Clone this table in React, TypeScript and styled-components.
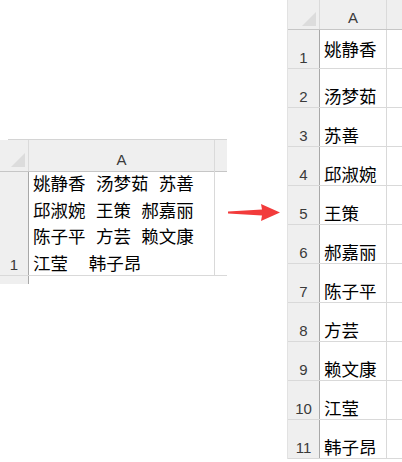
import styled, { createGlobalStyle } from 'styled-components';

const GlobalStyle = createGlobalStyle`
  html, body {
    margin: 0;
    padding: 0;
    background: #ffffff;
    overflow: hidden;
  }
`;

const CJK = `"Noto Sans CJK SC", "Noto Sans", sans-serif`;
const NUM = `"Liberation Sans", Arial, sans-serif`;

const Page = styled.div`
  display: flex;
  align-items: flex-start;
  width: 402px;
  height: 462px;
  overflow: hidden;
`;

//------ left sheet (before)

const SheetBefore = styled.div`
  width: 228px;
  margin-top: 139px;
  display: flex;
  flex-direction: column;
`;

const TabEdge = styled.div`
  height: 1px;
  margin-left: 8px;
  background: #d4d4d4;
`;

const HeaderRow = styled.div<{ $h: number }>`
  display: flex;
  height: ${(p) => p.$h}px;
  box-sizing: border-box;
  background: #efefef;
  border-bottom: 1px solid #c6c6c6;
`;

const Corner = styled.div<{ $w: number }>`
  position: relative;
  width: ${(p) => p.$w}px;
  flex-shrink: 0;
  box-sizing: border-box;
  border-right: 1px solid #dadada;
`;

const CornerMark = styled.div<{ $right: number; $bottom: number }>`
  position: absolute;
  right: ${(p) => p.$right}px;
  bottom: ${(p) => p.$bottom}px;
  width: 0;
  height: 0;
  border-left: 14px solid transparent;
  border-bottom: 14px solid #dcdcdc;
`;

const ColHead = styled.div<{ $w: number; $pb: number }>`
  width: ${(p) => p.$w}px;
  flex-shrink: 0;
  box-sizing: border-box;
  border-right: 1px solid #dadada;
  display: flex;
  align-items: flex-end;
  justify-content: center;
  padding-bottom: ${(p) => p.$pb}px;
  font-family: ${NUM};
  font-size: 15px;
  line-height: 15px;
  color: #3a3a3a;
`;

const BodyRow = styled.div<{ $h: number }>`
  display: flex;
  height: ${(p) => p.$h}px;
  box-sizing: border-box;
  border-bottom: 1px solid #d9d9d9;
`;

const RowHead = styled.div<{ $w: number; $pb: number }>`
  width: ${(p) => p.$w}px;
  flex-shrink: 0;
  box-sizing: border-box;
  background: #efefef;
  border-right: 1px solid #a8a8a8;
  display: flex;
  align-items: flex-end;
  justify-content: center;
  padding-bottom: ${(p) => p.$pb}px;
  font-family: ${NUM};
  font-size: 15px;
  line-height: 15px;
  color: #3a3a3a;
`;

const WrapCell = styled.div`
  width: 186px;
  flex-shrink: 0;
  box-sizing: border-box;
  border-right: 1px solid #d9d9d9;
  padding: 0 0 0 4px;
  margin-top: -2px;
  font-family: ${CJK};
  font-size: 17.5px;
  line-height: 26.5px;
  word-spacing: 6.5px;
  white-space: pre;
  color: #000;
`;

const Filler = styled.div`
  flex: 1;
`;

const GrayTail = styled.div`
  width: 29px;
  height: 8px;
  background: #efefef;
  box-sizing: border-box;
  border-right: 1px solid #a8a8a8;
`;

//------ arrow

const ArrowBox = styled.div`
  margin-top: 204px;
  margin-left: 1px;
  width: 52px;
  height: 17px;
  flex-shrink: 0;
`;

//------ right sheet (after)

const SheetAfter = styled.div`
  margin-left: 7px;
  width: 114px;
  flex-shrink: 0;
  border-left: 1px solid #e2e2e2;
  display: flex;
  flex-direction: column;
`;

const NameCell = styled.div<{ $top?: boolean }>`
  width: 67px;
  flex-shrink: 0;
  box-sizing: border-box;
  border-right: 1px solid #d9d9d9;
  display: flex;
  align-items: ${(p) => (p.$top ? 'flex-start' : 'flex-end')};
  padding: ${(p) => (p.$top ? '9px 0 0 4px' : '0 0 1px 4px')};
  font-family: ${CJK};
  font-size: 17.5px;
  line-height: 20px;
  color: #000;
`;

const lines = ['姚静香 汤梦茹 苏善', '邱淑婉 王策 郝嘉丽', '陈子平 方芸 赖文康', '江莹  韩子昂'];
const names = ['姚静香', '汤梦茹', '苏善', '邱淑婉', '王策', '郝嘉丽', '陈子平', '方芸', '赖文康', '江莹', '韩子昂'];

export default function App() {
  return (
    <>
      <GlobalStyle />
      <Page>
        <SheetBefore>
          <TabEdge />
          <HeaderRow $h={32}>
            <Corner $w={29}>
              <CornerMark $right={3} $bottom={4} />
            </Corner>
            <ColHead $w={186} $pb={4}>A</ColHead>
            <Filler />
          </HeaderRow>
          <BodyRow $h={104}>
            <RowHead $w={29} $pb={3}>1</RowHead>
            <WrapCell>{lines.join('\n')}</WrapCell>
            <Filler />
          </BodyRow>
          <GrayTail />
        </SheetBefore>

        <ArrowBox>
          <svg width="52" height="17" viewBox="0 0 52 17">
            <polygon points="0,7.6 34,5.6 33,0 52,8.5 33,17 34,11.4 0,9.4" fill="#f23b3b" />
          </svg>
        </ArrowBox>

        <SheetAfter>
          <HeaderRow $h={30}>
            <Corner $w={32}>
              <CornerMark $right={3} $bottom={3} />
            </Corner>
            <ColHead $w={67} $pb={4}>A</ColHead>
            <Filler />
          </HeaderRow>
          {names.map((n, i) => (
            <BodyRow key={n} $h={39}>
              <RowHead $w={32} $pb={3}>{i + 1}</RowHead>
              <NameCell $top={i === 0}>{n}</NameCell>
              <Filler />
            </BodyRow>
          ))}
        </SheetAfter>
      </Page>
    </>
  );
}
